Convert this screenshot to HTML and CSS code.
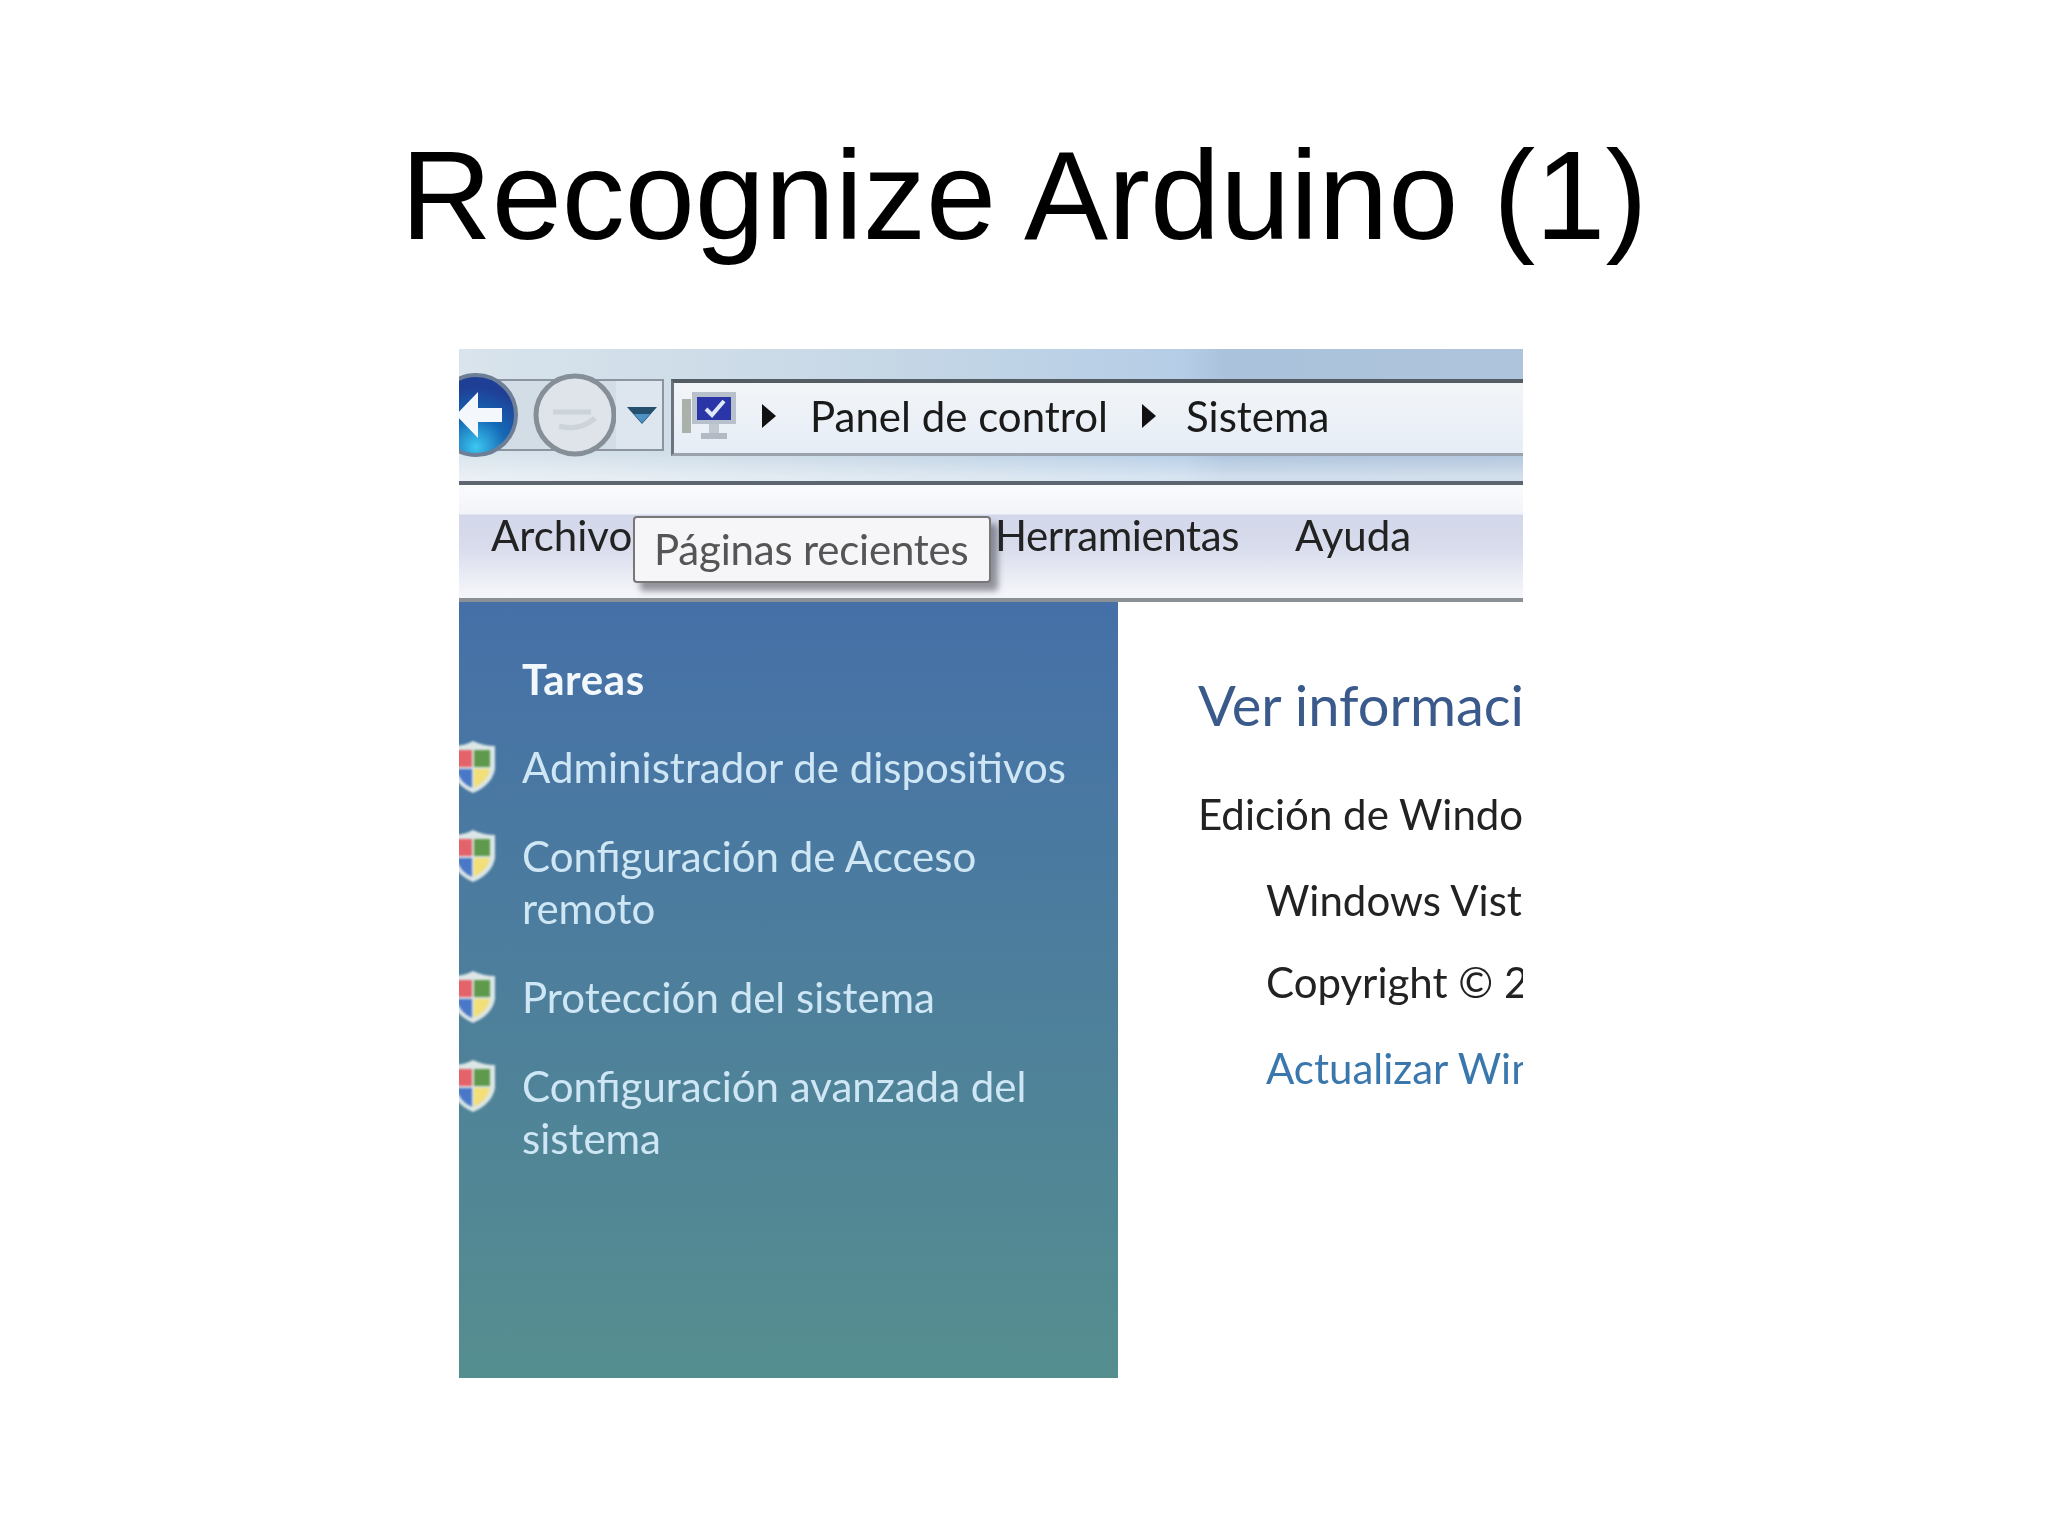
FILE: index.html
```html
<!DOCTYPE html>
<html>
<head>
  <meta charset="UTF-8">
  <title>Recognize Arduino (1)</title>
  <link rel="stylesheet" href="styles.css">
</head>
<body>
  <h1 class="title">Recognize Arduino (1)</h1>

  <div class="shot">
    <div class="toolbar">
      <div class="nav-group">
        <div class="nav-btn back">
          <svg viewBox="0 0 84 86" width="84" height="86">
            <defs>
              <radialGradient id="backFill" cx="50%" cy="90%" r="75%">
                <stop offset="0" stop-color="#3cc8f0"/>
                <stop offset="0.5" stop-color="#1568b6"/>
                <stop offset="1" stop-color="#1f3f96"/>
              </radialGradient>
            </defs>
            <circle cx="42" cy="43" r="40" fill="url(#backFill)" stroke="#6d7f96" stroke-width="4"/>
            <path d="M22 43 L44 20 L44 36 L68 36 L68 50 L44 50 L44 66 Z" fill="#f4f7fb"/>
          </svg>
        </div>
        <div class="nav-btn forward">
          <svg viewBox="0 0 84 90" width="84" height="90">
            <circle cx="42" cy="45" r="39" fill="#dee4e9" stroke="#868f98" stroke-width="5"/>
            <path d="M20 42 H58 M26 56 Q46 62 62 48" fill="none" stroke="#ccd3d9" stroke-width="5"/>
          </svg>
        </div>
        <div class="dropdown">
          <svg viewBox="0 0 32 20" width="32" height="20">
            <path d="M1 2 H31 L16 19 Z" fill="#24506e"/>
            <path d="M8 9 H24 L16 18 Z" fill="#4c93c4"/>
          </svg>
        </div>
      </div>
      <div class="address">
        <span class="addr-grip"></span>
        <svg class="addr-icon" viewBox="0 0 44 48" width="44" height="48">
          <rect x="0" y="0" width="44" height="32" fill="#b8c0cc"/>
          <rect x="5" y="5" width="34" height="23" fill="#2a35a8"/>
          <path d="M14 17 L20 23 L32 9" fill="none" stroke="#dfe8f5" stroke-width="4"/>
          <rect x="17" y="32" width="10" height="9" fill="#c2c8d0"/>
          <rect x="9" y="41" width="26" height="6" fill="#b3bac4"/>
        </svg>
        <span class="crumb-arrow first"></span>
        <span class="crumb">Panel de control</span>
        <span class="crumb-arrow"></span>
        <span class="crumb">Sistema</span>
      </div>
    </div>

    <div class="menubar">
      <span class="menu-item archivo">Archivo</span>
      <span class="menu-item herramientas">Herramientas</span>
      <span class="menu-item ayuda">Ayuda</span>
      <div class="tooltip">Páginas recientes</div>
    </div>

    <div class="panes">
      <div class="sidebar">
        <div class="side-title">Tareas</div>
        <ul class="tasks">
          <li class="task">
            <svg class="shield" viewBox="0 0 44 52" width="44" height="52"><use href="#shield"/></svg>
            <span>Administrador de dispositivos</span>
          </li>
          <li class="task">
            <svg class="shield" viewBox="0 0 44 52" width="44" height="52"><use href="#shield"/></svg>
            <span>Configuración de Acceso<br>remoto</span>
          </li>
          <li class="task">
            <svg class="shield" viewBox="0 0 44 52" width="44" height="52"><use href="#shield"/></svg>
            <span>Protección del sistema</span>
          </li>
          <li class="task">
            <svg class="shield" viewBox="0 0 44 52" width="44" height="52"><use href="#shield"/></svg>
            <span>Configuración avanzada del<br>sistema</span>
          </li>
        </ul>
      </div>
      <div class="content">
        <h2 class="content-title">Ver información</h2>
        <p class="edition">Edición de Windows</p>
        <p class="info first">Windows Vista</p>
        <p class="info">Copyright © 2007</p>
        <p class="info link">Actualizar Windows</p>
      </div>
    </div>
  </div>

  <svg class="defs" width="0" height="0">
    <symbol id="shield" viewBox="0 0 44 52">
      <path d="M0 5 Q14 5 22 0 Q32 5 44 5 L44 28 Q41 44 22 52 Q4 44 0 28 Z" fill="#dce6e6"/>
      <path d="M4 9 H21 V26 H4 Z" fill="#e4626a"/>
      <path d="M23 9 H39 V26 H23 Z" fill="#5f9a4c"/>
      <path d="M5 28 H21 V47 Q9 42 5 28 Z" fill="#4a78c8"/>
      <path d="M23 28 H39 Q37 40 23 47 Z" fill="#f2df78"/>
    </symbol>
  </svg>
</body>
</html>
```

FILE: styles.css
```css
* {
  margin: 0;
  padding: 0;
  box-sizing: border-box;
}

body {
  font-family: "Liberation Sans", Arial, sans-serif;
  background: #fff;
  width: 2048px;
  height: 1536px;
  overflow: hidden;
}

.title {
  font-size: 126px;
  font-weight: 400;
  line-height: 142px;
  color: #000;
  text-align: center;
  padding-top: 125px;
  height: 349px;
}

/* the pasted vista screenshot */
.shot {
  width: 1064px;
  height: 1029px;
  margin-left: 459px;
  overflow: hidden;
  font-family: Lato, "Open Sans", sans-serif;
  font-size: 42px;
  filter: blur(0.7px);
}

.toolbar {
  height: 136px;
  display: flex;
  align-items: center;
  background:
    linear-gradient(180deg, rgba(255, 255, 255, 0) 78%, rgba(255, 255, 255, 0.45) 97%),
    linear-gradient(90deg, #d9e4ec 0%, #c6d7e6 40%, #b5cde6 68%, #abc2dc 72%, #aec4dc 100%);
  border-bottom: 4px solid #5d6670;
}

.nav-group {
  flex: none;
  height: 72px;
  display: flex;
  align-items: center;
  background: #d3dde6;
  border-top: 2px solid #8b959f;
  border-bottom: 2px solid #8b959f;
}

.nav-btn {
  flex: none;
  display: flex;
}

.nav-btn.back {
  margin-left: -25px;
}

.nav-btn.forward {
  margin-left: 15px;
}

.dropdown {
  flex: none;
  width: 48px;
  height: 68px;
  margin-left: -1px;
  display: flex;
  align-items: center;
  justify-content: flex-end;
  padding-right: 4px;
  background: #dde6ef;
  border-right: 2px solid #8b959f;
}

.address {
  flex: 1;
  height: 77px;
  margin: 4px 0 0 7px;
  padding-bottom: 4px;
  display: flex;
  align-items: center;
  color: #1a1a1a;
  background: linear-gradient(180deg, #f2f5f8, #e6edf6);
  border-top: 4px solid #545c64;
  border-left: 3px solid #6b747d;
  border-bottom: 3px solid #9aa3ab;
}

.addr-grip {
  width: 9px;
  height: 34px;
  margin-left: 8px;
  background: #a9b1a9;
}

.addr-icon {
  margin-left: 1px;
}

.crumb-arrow {
  width: 0;
  height: 0;
  margin: 0 30px 0 34px;
  border-left: 14px solid #111;
  border-top: 12px solid transparent;
  border-bottom: 12px solid transparent;
}

.crumb-arrow.first {
  margin: 0 34px 0 26px;
}

.menubar {
  position: relative;
  height: 117px;
  padding-top: 20px;
  line-height: 60px;
  color: #222;
  background: linear-gradient(180deg, #fafbfd 0, #f2f4f9 29px, #d2d7ea 30px, #d8dcec 62px, #f4f5fa 108px);
  border-bottom: 4px solid #8a9096;
}

.menu-item {
  position: absolute;
}

.archivo {
  left: 32px;
}

.herramientas {
  left: 536px;
  letter-spacing: -0.4px;
}

.ayuda {
  left: 836px;
}

.tooltip {
  position: absolute;
  left: 174px;
  top: 31px;
  width: 358px;
  height: 67px;
  padding-left: 19px;
  line-height: 62px;
  letter-spacing: -0.2px;
  color: #555;
  background: #f6f6f8;
  border: 2px solid #777;
  border-radius: 4px;
  box-shadow: 7px 8px 6px rgba(70, 70, 80, 0.55);
}

.panes {
  display: grid;
  grid-template-columns: 659px 1fr;
  height: 776px;
  background: #fff;
}

.sidebar {
  padding: 51px 0 0 0;
  background: linear-gradient(180deg, #4570a8 0%, #558e8f 100%);
  color: #cfe6f5;
}

.side-title {
  padding-left: 63px;
  line-height: 52px;
  font-weight: 700;
  letter-spacing: 0.6px;
  color: #f2f8fb;
}

.tasks {
  list-style: none;
  margin-top: 36px;
}

.task {
  display: flex;
  line-height: 52px;
  margin-bottom: 37px;
}

.shield {
  flex: none;
  margin: 0 27px 0 -8px;
  filter: blur(1px);
}

.content {
  padding: 68px 0 0 80px;
  overflow: hidden;
  white-space: nowrap;
  color: #222;
}

.content-title {
  font-size: 56px;
  font-weight: 400;
  line-height: 70px;
  color: #3a5a8c;
}

.edition {
  margin-top: 48px;
  line-height: 52px;
}

.info {
  margin-top: 30px;
  margin-left: 68px;
  line-height: 52px;
}

.info.first {
  margin-top: 34px;
}

.info.link {
  margin-top: 34px;
  color: #3a77ad;
}

.defs {
  position: absolute;
}
```
